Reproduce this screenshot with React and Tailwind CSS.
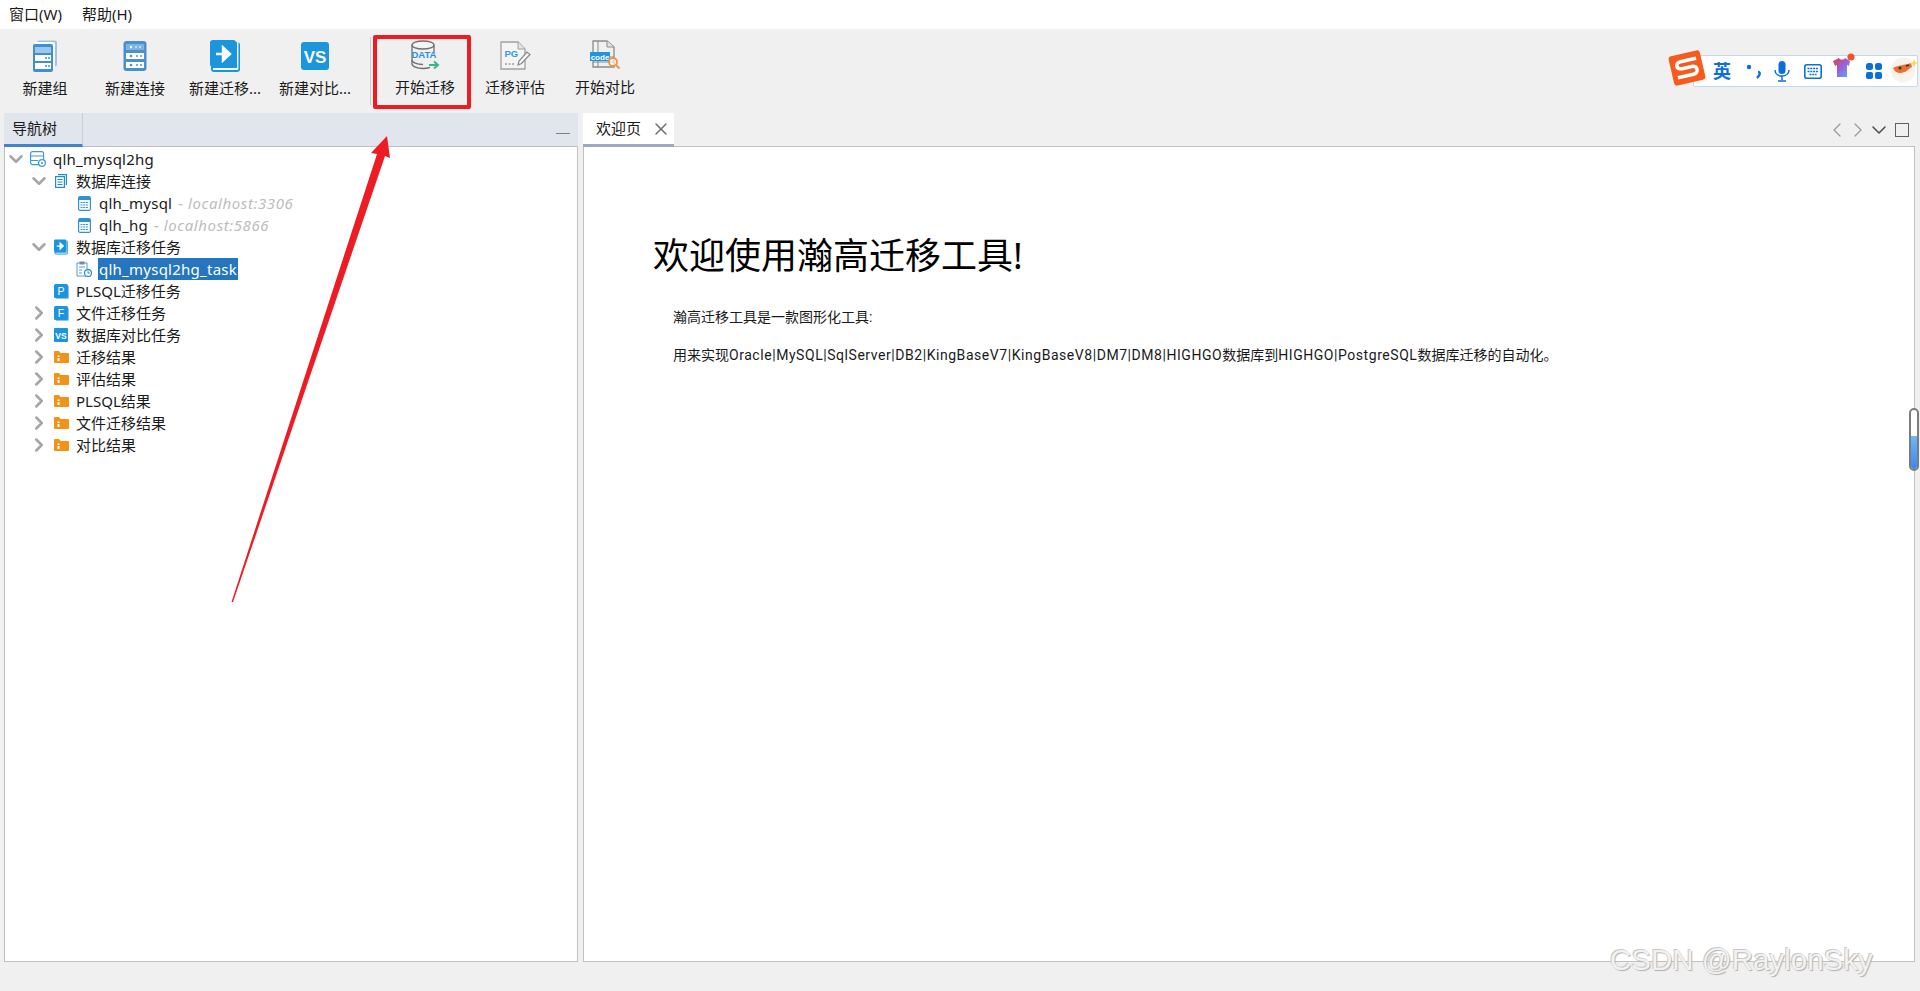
import React from "react";
import { ChevronDown, ChevronRight, ChevronLeft, X } from "lucide-react";

const cjk = "font-['Noto_Sans','Noto_Sans_CJK_SC',sans-serif]";

// toolbar icons
const GroupIcon = () => (
  <svg width="26" height="32" viewBox="0 0 26 32">
    <rect x="5" y="0.5" width="20" height="26" rx="2" fill="#9cc4e6" />
    <rect x="3" y="2" width="20" height="27" rx="2" fill="#fff" />
    <rect x="1" y="4" width="20" height="28" rx="2" fill="#3f8fd2" />
    <rect x="3" y="7" width="16" height="6" fill="#9cc8ee" />
    <rect x="3" y="15" width="16" height="6" fill="#fff" />
    <rect x="3" y="23" width="16" height="6" fill="#fff" />
    <circle cx="14" cy="18" r="1" fill="#3f8fd2" />
    <circle cx="17" cy="18" r="1" fill="#3f8fd2" />
    <circle cx="14" cy="26" r="1" fill="#3f8fd2" />
    <circle cx="17" cy="26" r="1" fill="#3f8fd2" />
  </svg>
);

const ConnIcon = () => (
  <svg width="24" height="30" viewBox="0 0 24 30">
    <rect x="0.5" y="0" width="23" height="30" rx="3" fill="#4a90cf" />
    <rect x="3" y="3" width="18" height="6" fill="#7fb3e0" />
    <rect x="3" y="12" width="18" height="6" fill="#fff" />
    <rect x="3" y="21" width="18" height="6" fill="#fff" />
    <circle cx="8" cy="6" r="1.2" fill="#fff" />
    <circle cx="13" cy="6" r="1" fill="#cfe3f5" />
    <circle cx="17" cy="6" r="1" fill="#cfe3f5" />
    <circle cx="8" cy="15" r="1.3" fill="#4a90cf" />
    <circle cx="14" cy="15" r="1" fill="#4a90cf" />
    <circle cx="18" cy="15" r="1" fill="#4a90cf" />
    <circle cx="8" cy="24" r="1.3" fill="#4a90cf" />
    <circle cx="14" cy="24" r="1" fill="#4a90cf" />
    <circle cx="18" cy="24" r="1" fill="#4a90cf" />
  </svg>
);

const MigrateIcon = ({ size = 30 }) => (
  <svg width={size} height={size + 2} viewBox="0 0 30 32">
    <rect x="1" y="2" width="29" height="30" rx="3" fill="#1b96dc" />
    <rect x="3" y="28" width="25" height="2" fill="#fff" />
    <rect x="27" y="2" width="1.4" height="27" fill="#fff" />
    <rect x="0" y="0" width="26" height="27" rx="3" fill="#1b96dc" />
    <path d="M6 14h10M13 7.5l7 6.5-7 6.5z" stroke="#fff" strokeWidth="2.4" fill="#fff" />
  </svg>
);

const VsIcon = () => (
  <svg width="28" height="28" viewBox="0 0 28 28">
    <rect width="28" height="28" rx="3" fill="#1b96dc" />
    <text x="14" y="20.5" textAnchor="middle" fontFamily="Liberation Sans" fontWeight="700" fontSize="17" fill="#fff">VS</text>
  </svg>
);

const DataIcon = () => (
  <svg width="30" height="30" viewBox="0 0 30 30">
    <path d="M2 5v19c0 2.500 5 4.500 11 4.500 3 0 5-.4 7-1.200M24 5v8" fill="none" stroke="#6e6e6e" strokeWidth="1.300" />
    <ellipse cx="13" cy="5" rx="11" ry="4" fill="#f4f4f4" stroke="#6e6e6e" strokeWidth="1.300" />
    <path d="M2 20c0 2.500 5 4.500 11 4.500" fill="none" stroke="#6e6e6e" strokeWidth="1.300" />
    <text x="14" y="18" textAnchor="middle" fontFamily="Liberation Sans" fontWeight="700" fontSize="9.500" fill="#2b8fd8">DATA</text>
    <path d="M19 25h8M24 21.500l4 3.500-4 3.500" fill="none" stroke="#35b58f" strokeWidth="2" />
  </svg>
);

const PgIcon = () => (
  <svg width="31" height="29" viewBox="0 0 31 29">
    <path d="M1 1h17l7 7v20H1z" fill="#f4f4f4" stroke="#a0a0a0" strokeWidth="1.300" />
    <path d="M18 1v7h7" fill="#e4e4e4" stroke="#a0a0a0" strokeWidth="1" />
    <text x="4.500" y="16" fontFamily="Liberation Sans" fontWeight="700" fontSize="9.500" fill="#3a9ade">PG</text>
    <path d="M5 23h10" stroke="#777" strokeDasharray="2 1.500" />
    <path d="M18 24l1-4 8-9 3 2.500-8.500 9z" fill="#f4f4f4" stroke="#8a8a8a" strokeWidth="1.200" />
  </svg>
);

const CodeIcon = () => (
  <svg width="31" height="30" viewBox="0 0 31 30">
    <path d="M3 1h14l7 6v20H3z" fill="#f0f0f0" stroke="#8a8a8a" strokeWidth="1.300" />
    <path d="M17 1v6h7" fill="#e4e4e4" stroke="#8a8a8a" />
    <path d="M8 1v26M3 17h21M3 22h21" stroke="#8a8a8a" />
    <rect x="0" y="12" width="20" height="9" fill="#2094dc" />
    <text x="10" y="19.500" textAnchor="middle" fontFamily="Liberation Sans" fontWeight="700" fontSize="8" fill="#fff">code</text>
    <circle cx="23" cy="22" r="4" fill="#fff" fillOpacity="0.6" stroke="#f2953a" strokeWidth="1.800" />
    <path d="M26 25l3.500 3.500" stroke="#f2953a" strokeWidth="2" />
  </svg>
);

// tree icons
const RootIcon = () => (
  <svg width="16" height="16" viewBox="0 0 16 16">
    <rect x="0.6" y="0.6" width="13" height="13" rx="2" fill="#fff" stroke="#3f9ad8" strokeWidth="1.200" />
    <path d="M1 5h12M1 9.500h7" stroke="#3f9ad8" />
    <circle cx="12" cy="12" r="3.400" fill="#fff" stroke="#3f9ad8" strokeWidth="1.300" />
    <circle cx="12" cy="12" r="1" fill="#3f9ad8" />
  </svg>
);

const ConnFolderIcon = () => (
  <svg width="12" height="14" viewBox="0 0 12 14">
    <path d="M3 .6h8.400v10.500" fill="none" stroke="#1b8fd4" strokeWidth="1.200" />
    <rect x="0.6" y="2.600" width="8.800" height="10.800" fill="#fff" stroke="#1b8fd4" strokeWidth="1.200" />
    <path d="M2.500 5.500h5M2.500 8h5M2.500 10.500h5" stroke="#1b8fd4" />
  </svg>
);

const DbIcon = () => (
  <svg width="13" height="15" viewBox="0 0 13 15">
    <rect x="0.600" y="0.600" width="11.800" height="13.800" rx="1.500" fill="#fff" stroke="#2d93d8" strokeWidth="1.200" />
    <rect x="1" y="1" width="11" height="3" fill="#2d93d8" />
    <path d="M2.500 6.500h8M2.500 9h8M2.500 11.500h8" stroke="#2d93d8" strokeDasharray="2 .7" />
  </svg>
);

const TaskIcon = () => (
  <svg width="16" height="16" viewBox="0 0 16 16">
    <path d="M1 2h10v13H1z" fill="#fff" stroke="#4a9fd8" />
    <rect x="3.500" y="0.500" width="5" height="3" fill="#7a8a9a" />
    <path d="M3 6h6M3 9h3M3 12h3" stroke="#4a9fd8" />
    <circle cx="12" cy="12" r="3.500" fill="#fff" stroke="#2d93d8" strokeWidth="1.300" />
    <path d="M12 10v2h2" fill="none" stroke="#2d93d8" />
  </svg>
);

const LetterIcon = ({ letter }) => (
  <svg width="15" height="15" viewBox="0 0 15 15">
    <rect x="1.500" y="1.500" width="13.500" height="13.500" rx="1.500" fill="#8cc4e8" />
    <rect width="14" height="14" rx="1.500" fill="#1b96dc" />
    <text x="7" y="11" textAnchor="middle" fontFamily="Liberation Sans" fontSize="10.500" fontWeight="400" fill="#fff">{letter}</text>
  </svg>
);

const SmallVsIcon = () => (
  <svg width="14" height="14" viewBox="0 0 14 14">
    <rect width="14" height="14" rx="1" fill="#1b96dc" />
    <text x="7" y="10.500" textAnchor="middle" fontFamily="Liberation Sans" fontSize="8.500" fontWeight="700" fill="#fff">VS</text>
  </svg>
);

const FolderIcon = () => (
  <svg width="15" height="12" viewBox="0 0 15 12">
    <path d="M0 1a1 1 0 0 1 1-1h4l1.500 2H14a1 1 0 0 1 1 1v8a1 1 0 0 1-1 1H1a1 1 0 0 1-1-1z" fill="#f39218" />
    <rect x="3.500" y="4.500" width="2" height="1.500" fill="#fff" />
    <rect x="3.500" y="7" width="2" height="3" fill="#fff" />
  </svg>
);

const tools1 = [
  { label: "新建组", icon: <GroupIcon /> },
  { label: "新建连接", icon: <ConnIcon /> },
  { label: "新建迁移...", icon: <MigrateIcon /> },
  { label: "新建对比...", icon: <VsIcon /> },
];

const tools2 = [
  { label: "开始迁移", icon: <DataIcon /> },
  { label: "迁移评估", icon: <PgIcon /> },
  { label: "开始对比", icon: <CodeIcon /> },
];

const ToolButton = ({ label, icon }) => (
  <div className="w-[90px] flex flex-col items-center">
    <div className="h-[34px] flex items-center justify-center">{icon}</div>
    <div className="mt-[5px] text-[15px] leading-[20px] text-[#1a1a1a] whitespace-nowrap">{label}</div>
  </div>
);

const tree = [
  { level: 0, open: true, icon: <RootIcon />, text: "qlh_mysql2hg", latin: true },
  { level: 1, open: true, icon: <ConnFolderIcon />, text: "数据库连接" },
  { level: 2, icon: <DbIcon />, text: "qlh_mysql", note: "- localhost:3306", latin: true },
  { level: 2, icon: <DbIcon />, text: "qlh_hg", note: "- localhost:5866", latin: true },
  { level: 1, open: true, icon: <MigrateIcon size={14} />, text: "数据库迁移任务" },
  { level: 2, icon: <TaskIcon />, text: "qlh_mysql2hg_task", selected: true, latin: true },
  { level: 1, icon: <LetterIcon letter="P" />, text: "PLSQL迁移任务" },
  { level: 1, closed: true, icon: <LetterIcon letter="F" />, text: "文件迁移任务" },
  { level: 1, closed: true, icon: <SmallVsIcon />, text: "数据库对比任务" },
  { level: 1, closed: true, icon: <FolderIcon />, text: "迁移结果" },
  { level: 1, closed: true, icon: <FolderIcon />, text: "评估结果" },
  { level: 1, closed: true, icon: <FolderIcon />, text: "PLSQL结果" },
  { level: 1, closed: true, icon: <FolderIcon />, text: "文件迁移结果" },
  { level: 1, closed: true, icon: <FolderIcon />, text: "对比结果" },
];

const TreeRow = ({ row }) => (
  <div className="h-[22px] flex items-center" style={{ paddingLeft: row.level * 23 + 2 }}>
    <div className="w-[17px] h-[22px] shrink-0 flex items-center justify-center text-[#a6a6a6]">
      {row.open && <ChevronDown size={22} strokeWidth={2.8} className="shrink-0" />}
      {row.closed && <ChevronRight size={22} strokeWidth={2.8} className="shrink-0" />}
    </div>
    <div className="w-[18px] ml-[5px] flex justify-center">{row.icon}</div>
    <div
      className={`ml-[5px] text-[15px] leading-[22px] whitespace-nowrap px-[1px] ${row.latin ? "tracking-[0.25px]" : ""} ${
        row.selected ? "bg-[#2675bf] text-white" : "text-[#1a1a1a]"
      }`}
    >
      {row.text}
    </div>
    {row.note && <div className="ml-[5px] text-[15px] italic tracking-[0.6px] text-[#bcbcbc] whitespace-nowrap">{row.note}</div>}
  </div>
);

const ImeBar = () => (
  <div className="absolute left-[1668px] top-[49px] w-[250px] h-[38px]">
    <div className="absolute left-[25px] top-[6px] right-0 h-[32px] bg-white border border-[#c5d6ea] rounded-[2px] flex items-center text-[#0a6fd8]">
      <span className="absolute left-[19px] text-[18px] font-bold">英</span>
      <svg className="absolute left-[52px]" width="16" height="18" viewBox="0 0 16 18">
        <circle cx="3" cy="5" r="2.200" fill="#0a6fd8" />
        <path d="M12 10c2.500 0 2.500 3-1 6" fill="none" stroke="#0a6fd8" strokeWidth="2.400" />
      </svg>
      <svg className="absolute left-[80px]" width="16" height="21" viewBox="0 0 16 21">
        <rect x="4.500" y="0" width="7" height="13" rx="3.500" fill="#0a6fd8" />
        <path d="M1 9c0 8 14 8 14 0M8 15v4M4 20h8" fill="none" stroke="#0a6fd8" strokeWidth="1.500" />
      </svg>
      <svg className="absolute left-[110px]" width="18" height="15" viewBox="0 0 18 15">
        <rect x="0.800" y="0.800" width="16.400" height="13.400" rx="2" fill="#fff" stroke="#0a6fd8" strokeWidth="1.600" />
        <path d="M3.500 4.500h11M3.500 7.500h11M5.500 10.500h7" stroke="#0a6fd8" strokeWidth="1.500" strokeDasharray="2 .8" />
      </svg>
      <svg className="absolute left-[139px] -top-[3px]" width="24" height="26" viewBox="0 0 24 26">
        <defs>
          <linearGradient id="shirt" x1="0" y1="0" x2="1" y2="1">
            <stop offset="0" stopColor="#e0433f" />
            <stop offset="0.5" stopColor="#9a5fe0" />
            <stop offset="1" stopColor="#4fb8f8" />
          </linearGradient>
        </defs>
        <path d="M0 8l6-3c1 2 5 2 6 0l5 3-1 5-2-1v12H4V12l-2 1z" fill="url(#shirt)" />
        <circle cx="18" cy="4" r="3.600" fill="#f4502a" />
      </svg>
      <svg className="absolute left-[172px]" width="16" height="16" viewBox="0 0 16 16">
        <rect x="0" y="0" width="7" height="7" rx="2.500" fill="#0a6fd8" />
        <rect x="9" y="0" width="7" height="7" rx="2.500" fill="#0a6fd8" />
        <rect x="0" y="9" width="7" height="7" rx="2" fill="#0a6fd8" />
        <rect x="9" y="9" width="7" height="7" rx="2" fill="#0a6fd8" />
      </svg>
      <svg className="absolute left-[196px] -top-[1px]" width="28" height="30" viewBox="0 0 28 30">
        <circle cx="13" cy="15" r="12.500" fill="#f7f2ec" />
        <path d="M3 13c5-3 12-3 18-5l1 4c-4 2-6 6-12 6-3 0-6-2-7-5z" fill="#ef6d2d" />
        <circle cx="10" cy="13" r="1.500" fill="#333" />
        <path d="M16 11l3-1" stroke="#333" strokeWidth="1.500" />
        <path d="M24 4l1.500 3 2.500 1-2.500 1-1.500 3-1-3-2-1 2-1z" fill="#f5df4d" />
      </svg>
    </div>
    {/* Sogou logo */}
    <svg className="absolute -left-[1px] -top-[1px]" width="40" height="40" viewBox="0 0 40 40">
      <g transform="rotate(-13 20 20)">
        <rect x="4" y="5" width="32" height="30" rx="3" fill="#f65a1c" />
        <path d="M31 12.500H15c-6 0-6 7 0 7h10c6 0 6 8 0 8H9" fill="none" stroke="#fff" strokeWidth="3.600" />
      </g>
    </svg>
  </div>
);

export default function App() {
  return (
    <div className={`relative w-full h-screen overflow-hidden flex flex-col bg-[#f0f0f0] ${cjk}`}>
      {/* Menu bar */}
      <div className="h-[29px] shrink-0 bg-white flex items-center pl-[9px] gap-[20px] text-[15px] text-[#1a1a1a]">
        <span>窗口(W)</span>
        <span>帮助(H)</span>
      </div>

      {/* Toolbar */}
      <div className="h-[84px] shrink-0 flex items-start">
        <div className="flex pt-[10px]">
          {tools1.map((t) => (
            <ToolButton key={t.label} {...t} />
          ))}
        </div>
        <div className="w-px h-[68px] mt-[8px] ml-[10px] mr-[9px] bg-[#cfcfcf]" />
        <div className="flex pt-[9px]">
          {tools2.map((t) => (
            <ToolButton key={t.label} {...t} />
          ))}
        </div>
      </div>

      {/* Panels */}
      <div className="flex-1 min-h-0 flex gap-[5px] pl-[4px] pr-[5px] pb-[29px]">
        <div className="w-[574px] flex flex-col">
          <div className="h-[34px] shrink-0 bg-[#e1e5ed] flex items-stretch justify-between border-b border-[#c0c0c0]">
            <div className="w-[79px] border-r border-[#c8ccd4] border-b-[3px] border-b-[#3f84cc] -mb-px pl-[8px] pt-[2px] text-[15px] leading-[26px] text-[#1a1a1a]">
              导航树
            </div>
            <div className="w-[14px] h-px bg-[#808080] mt-[20px] mr-[8px]" />
          </div>
          <div className="flex-1 bg-white border border-t-0 border-[#c0c0c0] pt-px">
            {tree.map((row) => (
              <TreeRow key={row.text} row={row} />
            ))}
          </div>
        </div>

        <div className="flex-1 min-w-0 flex flex-col">
          <div className="h-[34px] shrink-0 flex items-stretch justify-between border-b border-[#c0c0c0]">
            <div className="w-[91px] bg-white border-b-[3px] border-[#9fabbd] -mb-px flex items-center pl-[13px] pr-[3px] justify-between text-[15px] text-[#1a1a1a]">
              <span>欢迎页</span>
              <X size={20} strokeWidth={1.8} className="text-[#707070]" />
            </div>
            <div className="flex items-center pr-[6px] text-[#9a9a9a]">
              <ChevronLeft size={24} strokeWidth={1.3} />
              <ChevronRight size={24} strokeWidth={1.3} className="-ml-[3px]" />
              <ChevronDown size={24} strokeWidth={1.6} className="-ml-[3px] text-[#505050]" />
              <div className="w-[14px] h-[14px] ml-[4px] border border-[#606060]" />
            </div>
          </div>
          <div className="flex-1 bg-white border border-t-0 border-[#c0c0c0] pl-[69px] pt-[85px]">
            <h1 className="text-[36px] leading-[48px] text-black">欢迎使用瀚高迁移工具!</h1>
            <div className="ml-[20px] mt-[27px] text-[14px] leading-[20px] text-[#1a1a1a] font-['Roboto','Noto_Sans_CJK_SC',sans-serif]">
              <p>瀚高迁移工具是一款图形化工具:</p>
              <p className="mt-[18px]">
                用来实现
                <span className="tracking-[0.55px]">Oracle|MySQL|SqlServer|DB2|KingBaseV7|KingBaseV8|DM7|DM8|HIGHGO</span>
                数据库到
                <span className="tracking-[0.55px]">HIGHGO|PostgreSQL</span>
                数据库迁移的自动化。
              </p>
            </div>
          </div>
        </div>
      </div>

      {/* Red annotation around the start button */}
      <div className="absolute left-[373px] top-[35px] w-[98px] h-[74px] border-[4px] border-[#ed1c24] rounded-[2px]" />
      <svg className="absolute left-0 top-0 pointer-events-none" width="420" height="620" viewBox="0 0 420 620">
        <path d="M231.500 602L377 154 371 153 387 136 390 158 385 156 233 602z" fill="#ed1c24" />
      </svg>

      <ImeBar />

      {/* Scrollbar overlay */}
      <div className="absolute left-[1909px] top-[408px] w-[10px] h-[63px] rounded-[5px] border-2 border-[#7c7c7c] bg-white flex flex-col justify-end">
        <div className="h-[33px] rounded-b-[3px] bg-gradient-to-b from-[#6cb8fb] to-[#3b86ee]" />
      </div>

      {/* Watermark */}
      <div className="absolute left-[1610px] top-[942px] text-[29.5px] leading-[36px] whitespace-nowrap font-['Liberation_Sans',sans-serif] text-[#f2f2f2] [text-shadow:1px_1px_1px_#b0b0b0,-1px_-1px_0_#c8c8c8]">
        CSDN @RaylonSky
      </div>
    </div>
  );
}
